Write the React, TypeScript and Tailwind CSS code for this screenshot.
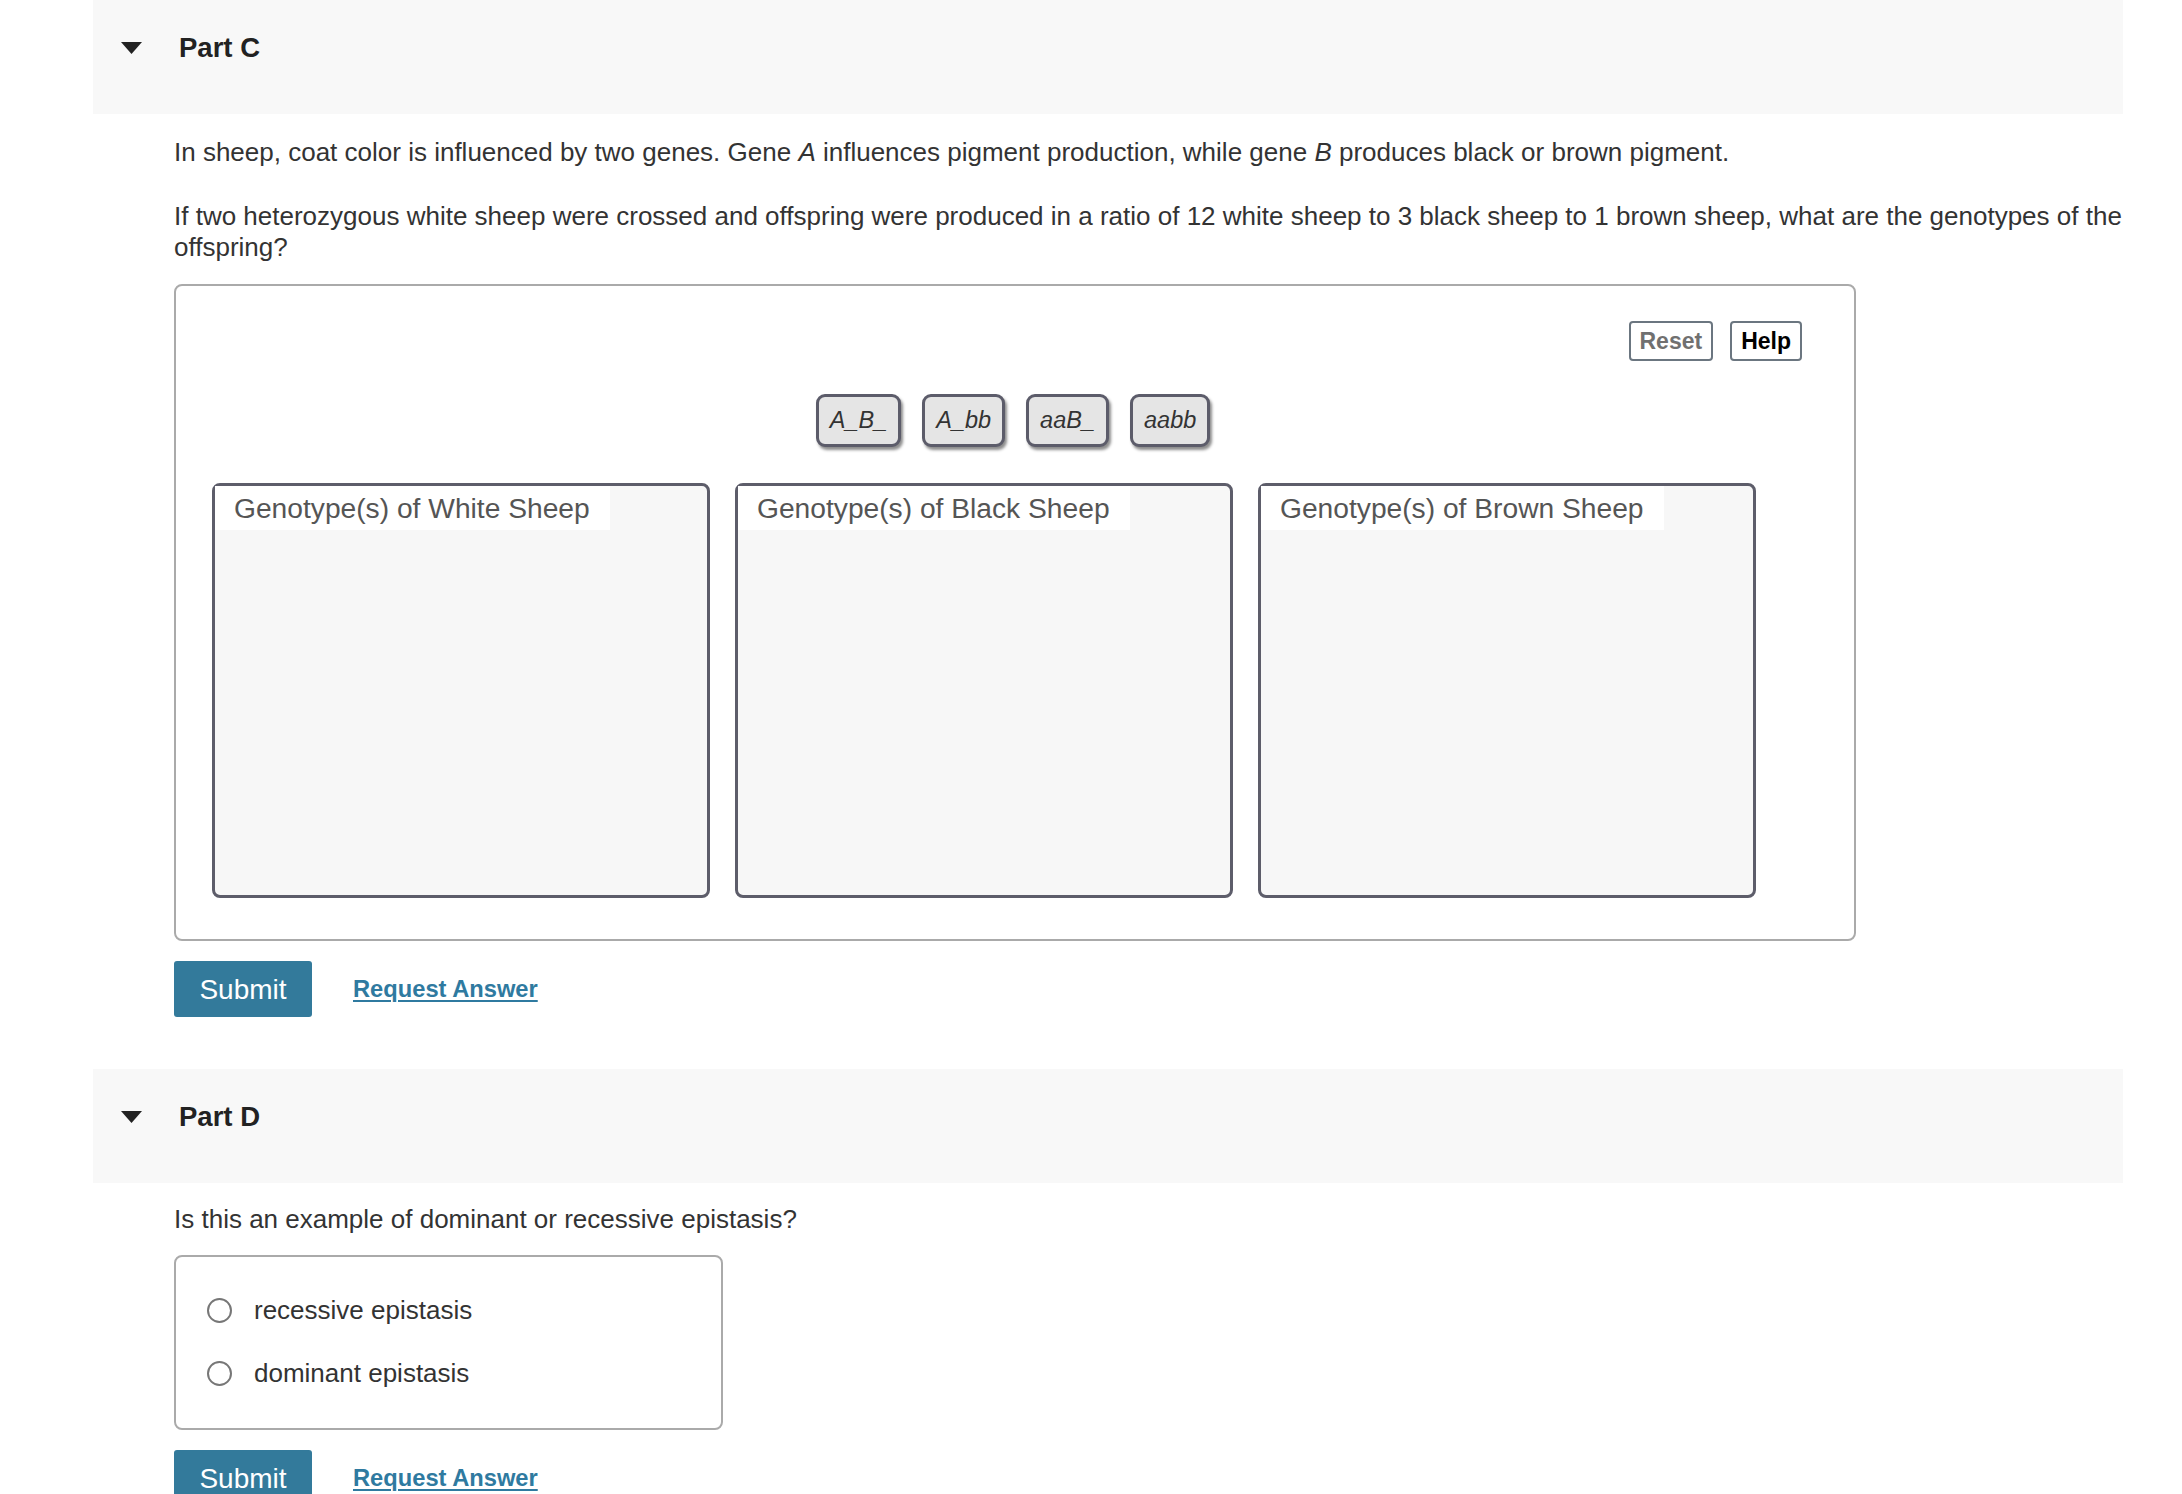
const font = { fontFamily: '"Liberation Sans", Arial, Helvetica, sans-serif' };

function Caret() {
  return (
    <svg width="21" height="12" viewBox="0 0 21 12" className="shrink-0">
      <path d="M0 0 H21 L10.5 12 Z" fill="#222" />
    </svg>
  );
}

function PartHeader({ label }: { label: string }) {
  return (
    <div className="flex h-[114px] items-start bg-[#f8f8f8] pl-[28px] pt-[32px]">
      <div className="mt-[10px]">
        <Caret />
      </div>
      <div className="ml-[37px] text-[27.5px] font-bold leading-[32px] text-[#222]">{label}</div>
    </div>
  );
}

function Actions() {
  return (
    <div className="flex items-center">
      <button className="h-[56px] w-[138px] rounded-[3px] bg-[#337a9b] text-[28px] text-white">
        Submit
      </button>
      <a className="ml-[41px] text-[23.7px] font-bold text-[#2f7aa0] underline decoration-2 underline-offset-[3px]">
        Request Answer
      </a>
    </div>
  );
}

const tiles = ["A_B_", "A_bb", "aaB_", "aabb"];
const zones = ["White", "Black", "Brown"];

function Tile({ t }: { t: string }) {
  return (
    <div className="flex h-[53px] items-center rounded-[9px] border-[3px] border-[#5c5c6a] bg-[#e5e5e5] px-[11px] text-[23.5px] italic text-[#333] shadow-[2px_3px_3px_rgba(0,0,0,0.45)]">
      {t}
    </div>
  );
}

function Zone({ name }: { name: string }) {
  return (
    <div className="h-[415px] w-[498px] rounded-[8px] border-[3px] border-[#5d5d6a] bg-[#f7f7f7]">
      <div className="inline-block bg-white pl-[19px] pr-[20px] text-[28.2px] leading-[44px] text-[#555]">
        Genotype(s) of {name} Sheep
      </div>
    </div>
  );
}

function Radio({ label }: { label: string }) {
  return (
    <div className="flex items-center">
      <span className="h-[25px] w-[25px] rounded-full border-2 border-[#777] bg-white" />
      <span className="ml-[22px] text-[26px] leading-[30px] text-[#333]">{label}</span>
    </div>
  );
}

export default function App() {
  return (
    <div className="min-h-screen bg-white text-[#333]" style={font}>
      <div className="ml-[93px] w-[2030px]">
        <PartHeader label="Part C" />
        <div className="pl-[81px] text-[26px] leading-[31px]">
          <p className="mt-[23px]">
            In sheep, coat color is influenced by two genes. Gene <i>A</i> influences pigment production, while gene{" "}
            <i>B</i> produces black or brown pigment.
          </p>
          <p className="mt-[33px] w-[1990px]">
            If two heterozygous white sheep were crossed and offspring were produced in a ratio of 12 white sheep to 3
            black sheep to 1 brown sheep, what are the genotypes of the offspring?
          </p>

          <div className="mt-[21px] w-[1682px] rounded-[8px] border-2 border-[#aaa] pb-[41px] pl-[36px] pt-[35px]">
            <div className="flex justify-end gap-[17px] pr-[52px]">
              <button className="h-[40px] rounded-[4px] border-2 border-[#6b7680] px-[9px] text-[23px] font-bold text-[#707070]">
                Reset
              </button>
              <button className="h-[40px] rounded-[4px] border-2 border-[#6b7680] px-[9px] text-[23px] font-bold text-black">
                Help
              </button>
            </div>
            <div className="mt-[33px] flex justify-center gap-[21px] pr-[40px]">
              {tiles.map((t) => (
                <Tile key={t} t={t} />
              ))}
            </div>
            <div className="mt-[36px] flex gap-[25px]">
              {zones.map((z) => (
                <Zone key={z} name={z} />
              ))}
            </div>
          </div>

          <div className="mt-[20px]">
            <Actions />
          </div>
        </div>

        <div className="mt-[52px]">
          <PartHeader label="Part D" />
        </div>
        <div className="pl-[81px] text-[26px] leading-[31px]">
          <p className="mt-[21px]">Is this an example of dominant or recessive epistasis?</p>
          <div className="mt-[20px] flex h-[175px] w-[549px] flex-col gap-[33px] rounded-[8px] border-2 border-[#aaa] pl-[31px] pt-[38px]">
            <Radio label="recessive epistasis" />
            <Radio label="dominant epistasis" />
          </div>
          <div className="mt-[20px] pb-[40px]">
            <Actions />
          </div>
        </div>
      </div>
    </div>
  );
}
